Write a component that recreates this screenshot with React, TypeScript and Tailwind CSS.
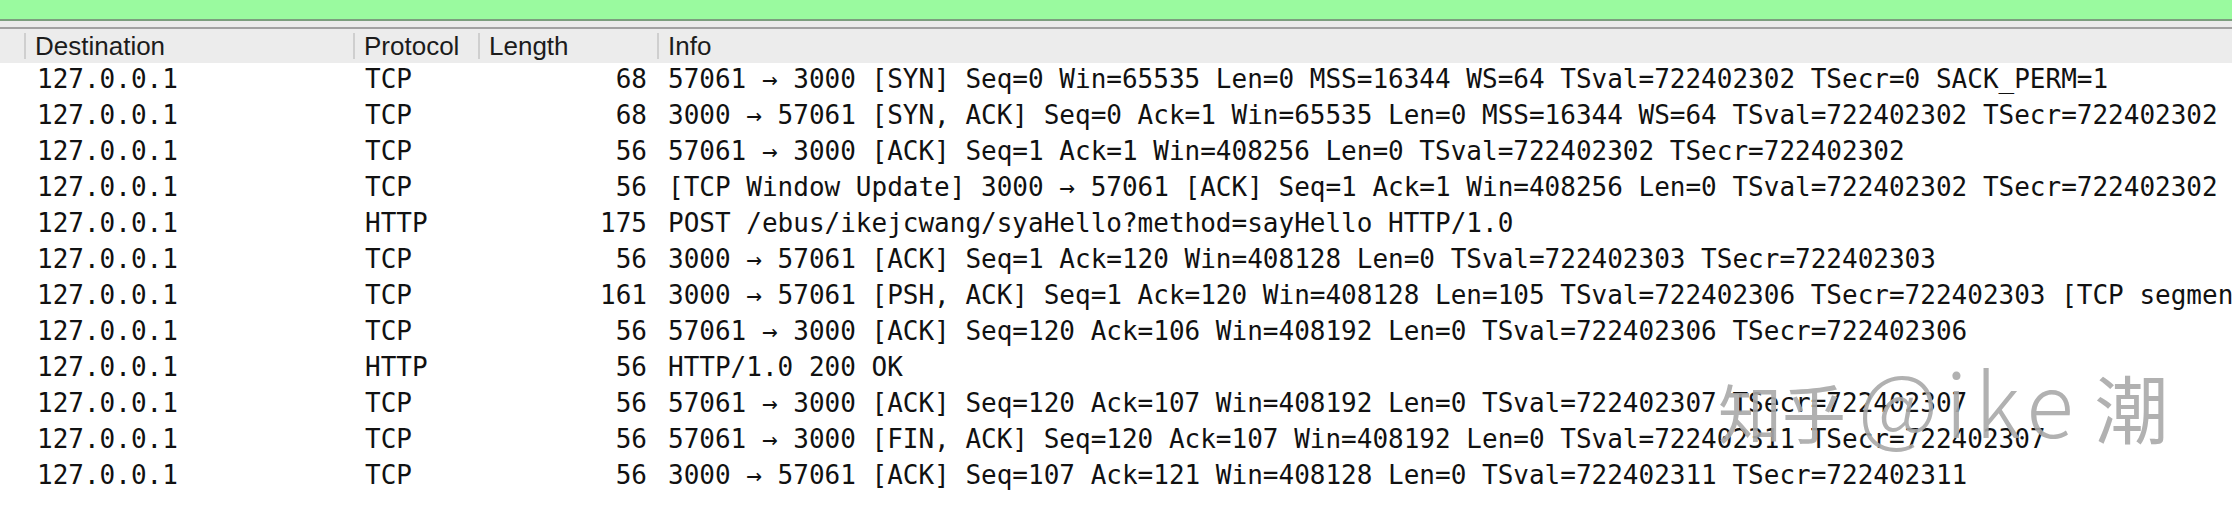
const rows = [
  ["TCP", "68", "57061 → 3000 [SYN] Seq=0 Win=65535 Len=0 MSS=16344 WS=64 TSval=722402302 TSecr=0 SACK_PERM=1"],
  ["TCP", "68", "3000 → 57061 [SYN, ACK] Seq=0 Ack=1 Win=65535 Len=0 MSS=16344 WS=64 TSval=722402302 TSecr=722402302"],
  ["TCP", "56", "57061 → 3000 [ACK] Seq=1 Ack=1 Win=408256 Len=0 TSval=722402302 TSecr=722402302"],
  ["TCP", "56", "[TCP Window Update] 3000 → 57061 [ACK] Seq=1 Ack=1 Win=408256 Len=0 TSval=722402302 TSecr=722402302"],
  ["HTTP", "175", "POST /ebus/ikejcwang/syaHello?method=sayHello HTTP/1.0"],
  ["TCP", "56", "3000 → 57061 [ACK] Seq=1 Ack=120 Win=408128 Len=0 TSval=722402303 TSecr=722402303"],
  ["TCP", "161", "3000 → 57061 [PSH, ACK] Seq=1 Ack=120 Win=408128 Len=105 TSval=722402306 TSecr=722402303 [TCP segment of a reassembled PDU]"],
  ["TCP", "56", "57061 → 3000 [ACK] Seq=120 Ack=106 Win=408192 Len=0 TSval=722402306 TSecr=722402306"],
  ["HTTP", "56", "HTTP/1.0 200 OK"],
  ["TCP", "56", "57061 → 3000 [ACK] Seq=120 Ack=107 Win=408192 Len=0 TSval=722402307 TSecr=722402307"],
  ["TCP", "56", "57061 → 3000 [FIN, ACK] Seq=120 Ack=107 Win=408192 Len=0 TSval=722402311 TSecr=722402307"],
  ["TCP", "56", "3000 → 57061 [ACK] Seq=107 Ack=121 Win=408128 Len=0 TSval=722402311 TSecr=722402311"],
];

function HeaderCell({ label, width }: { label: string; width?: string }) {
  return (
    <div className={`flex items-center h-full ${width ?? "flex-1"}`}>
      <span className="w-[2px] h-[26px] bg-[#cfcfcf] shrink-0" />
      <span className="pl-[9px] text-[26px] text-[#1c1c1c]">{label}</span>
    </div>
  );
}

export default function App() {
  return (
    <div className="relative w-[2232px] h-[510px] overflow-hidden bg-white">
      {/* display filter bar */}
      <div className="h-[19px] bg-[#9afa9f]" />
      <div className="h-[2px] bg-[#7c9e7e]" />
      <div className="h-[6px] bg-[#ebebeb]" />
      <div className="h-[2px] bg-[#a2a2a2]" />

      {/* column header */}
      <div
        className="flex h-[34px] bg-[#ececec] pl-[24px]"
        style={{ fontFamily: '"Liberation Sans", Arial, sans-serif' }}
      >
        <HeaderCell label="Destination" width="w-[329px]" />
        <HeaderCell label="Protocol" width="w-[125px]" />
        <HeaderCell label="Length" width="w-[179px]" />
        <HeaderCell label="Info" />
      </div>

      {/* packet list */}
      <div
        className="flex flex-col text-[26px] text-[#111] whitespace-nowrap"
        style={{ fontFamily: '"DejaVu Sans Mono", "Liberation Mono", monospace' }}
      >
        {rows.map(([proto, len, info], i) => (
          <div key={i} className="flex h-[36px] leading-[32px]">
            <div className="w-[353px] shrink-0 pl-[37px]">127.0.0.1</div>
            <div className="w-[125px] shrink-0 pl-[12px]">{proto}</div>
            <div className="w-[179px] shrink-0 pr-[10px] text-right">{len}</div>
            <div className="pl-[11px]">{info}</div>
          </div>
        ))}
      </div>

      {/* watermark */}
      <div
        className="absolute left-[1718px] top-[356px] flex items-baseline text-[#a9a9a9] opacity-90 whitespace-nowrap"
        style={{ fontFamily: '"Noto Sans CJK SC", "Liberation Sans", sans-serif' }}
      >
        <span className="text-[64px] leading-none">知乎</span>
        <span className="text-[88px] leading-none pl-[12px] font-light tracking-[7px]">@ike</span>
        <span className="text-[74px] leading-none pl-[14px]">潮</span>
      </div>
    </div>
  );
}
